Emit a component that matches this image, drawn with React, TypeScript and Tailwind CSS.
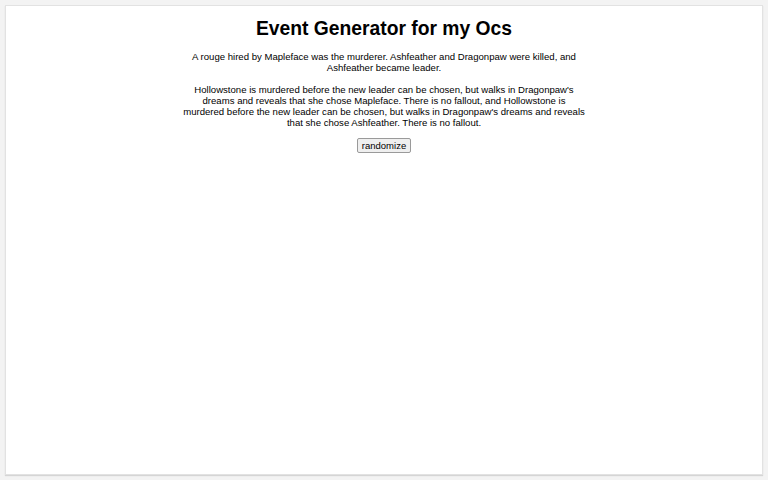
import React, { useState } from "react";

const events = [
  "A rouge hired by Mapleface was the murderer. Ashfeather and Dragonpaw were killed, and Ashfeather became leader.",
  "Hollowstone is murdered before the new leader can be chosen, but walks in Dragonpaw's dreams and reveals that she chose Mapleface. There is no fallout, and Hollowstone is murdered before the new leader can be chosen, but walks in Dragonpaw's dreams and reveals that she chose Ashfeather. There is no fallout.",
];

export default function App() {
  const [lines] = useState(events);

  return (
    <div className="h-[480px] w-[768px] bg-[#f3f3f3] p-[5px] font-['Liberation_Sans',Arial,sans-serif] text-black">
      <div className="h-full w-full bg-white border border-[#e2e2e2] shadow-[0_1px_1px_rgba(0,0,0,0.12)] flex flex-col items-center pt-[10px]">
        <h1 className="text-[19.3px] font-bold leading-[26px]">
          Event Generator for my Ocs
        </h1>
        <div className="mt-[9px] w-[403px] text-center text-[9.58px] leading-[11px] flex flex-col gap-[11px]">
          {lines.map((t, i) => (
            <p key={i}>{t}</p>
          ))}
        </div>
        <button className="mt-[10px] px-[4px] h-[15px] text-[9.5px] leading-none bg-[#efefef] border border-[#9a9a9a] rounded-[2px]">
          randomize
        </button>
      </div>
    </div>
  );
}
